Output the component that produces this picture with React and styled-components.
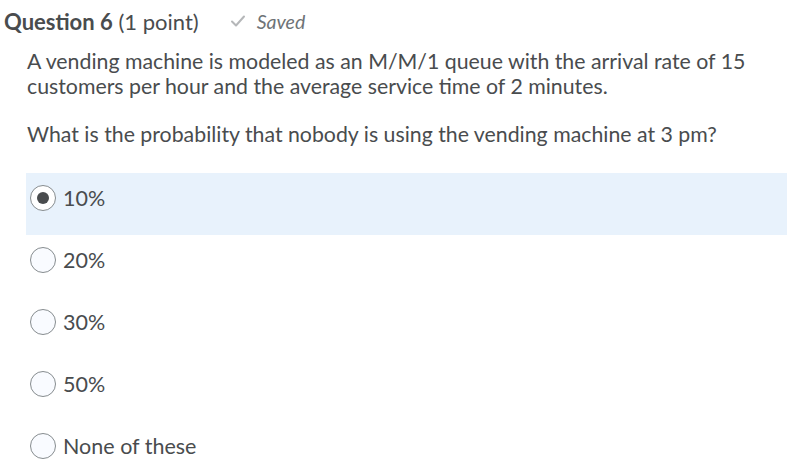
import styled, { createGlobalStyle } from "styled-components";

const GlobalStyle = createGlobalStyle`
    body {
        margin: 0;
        background: #ffffff;
        font-family: Lato, "Liberation Sans", sans-serif;
        color: #494c4e;
    }
`;

const OPTIONS = ["10%", "20%", "30%", "50%", "None of these"];

function Radio({ checked }) {
    return (
        <RadioCircle $checked={checked}>
            {checked && <RadioDot />}
        </RadioCircle>
    );
}

function App() {
    return (
        <>
            <GlobalStyle />
            <Page>
                <Header>
                    <Title>
                        <strong>Question 6</strong> (1 point)
                    </Title>
                    <Status>
                        <svg width="16" height="14" viewBox="0 0 16 14">
                            <path
                                d="M2 7.5 L6 11.5 L14 2.5"
                                fill="none"
                                stroke="#b5b7b9"
                                strokeWidth="2"
                                strokeLinecap="round"
                                strokeLinejoin="round"
                            />
                        </svg>
                        <em>Saved</em>
                    </Status>
                </Header>
                <Body>
                    <Text>
                        A vending machine is modeled as an M/M/1 queue with the arrival rate of 15
                        customers per hour and the average service time of 2 minutes.
                    </Text>
                    <Text>What is the probability that nobody is using the vending machine at 3 pm?</Text>
                    <Options>
                        {OPTIONS.map((label, i) => (
                            <Option key={label} $selected={i === 0}>
                                <Radio checked={i === 0} />
                                <span>{label}</span>
                            </Option>
                        ))}
                    </Options>
                </Body>
            </Page>
        </>
    );
}

export default App;

const Page = styled.div`
    width: 787px;
    height: 473px;
    overflow: hidden;
`;

const Header = styled.div`
    display: flex;
    align-items: center;
    gap: 31px;
    padding: 8px 0 0 4px;
    height: 26px;
`;

const Title = styled.h2`
    margin: 0;
    font-size: 22px;
    font-weight: 400;
    color: #494c4e;

    strong {
        font-weight: 700;
    }
`;

const Status = styled.div`
    display: flex;
    align-items: center;
    gap: 11px;
    color: #6e7376;
    font-size: 19.5px;

    em {
        font-style: italic;
    }
`;

const Body = styled.div`
    padding: 15px 0 0 26px;
`;

const Text = styled.p`
    margin: 0 0 23px 1px;
    max-width: 755px;
    font-size: 21.3px;
    line-height: 25px;
`;

const Options = styled.div`
    display: flex;
    flex-direction: column;
    margin-top: 26px;
`;

const Option = styled.label`
    box-sizing: border-box;
    display: flex;
    align-items: center;
    gap: 7px;
    height: 62px;
    padding: 12px 0 24px 4px;
    font-size: 21.5px;
    background: ${(p) => (p.$selected ? "#e8f2fc" : "transparent")};
`;

const RadioCircle = styled.span`
    box-sizing: border-box;
    width: 26px;
    height: 26px;
    border-radius: 50%;
    border: 1px solid #868c8f;
    background: ${(p) => (p.$checked ? "#ffffff" : "#f9fbff")};
    display: flex;
    align-items: center;
    justify-content: center;
`;

const RadioDot = styled.span`
    width: 12px;
    height: 12px;
    border-radius: 50%;
    background: #494c4e;
`;
